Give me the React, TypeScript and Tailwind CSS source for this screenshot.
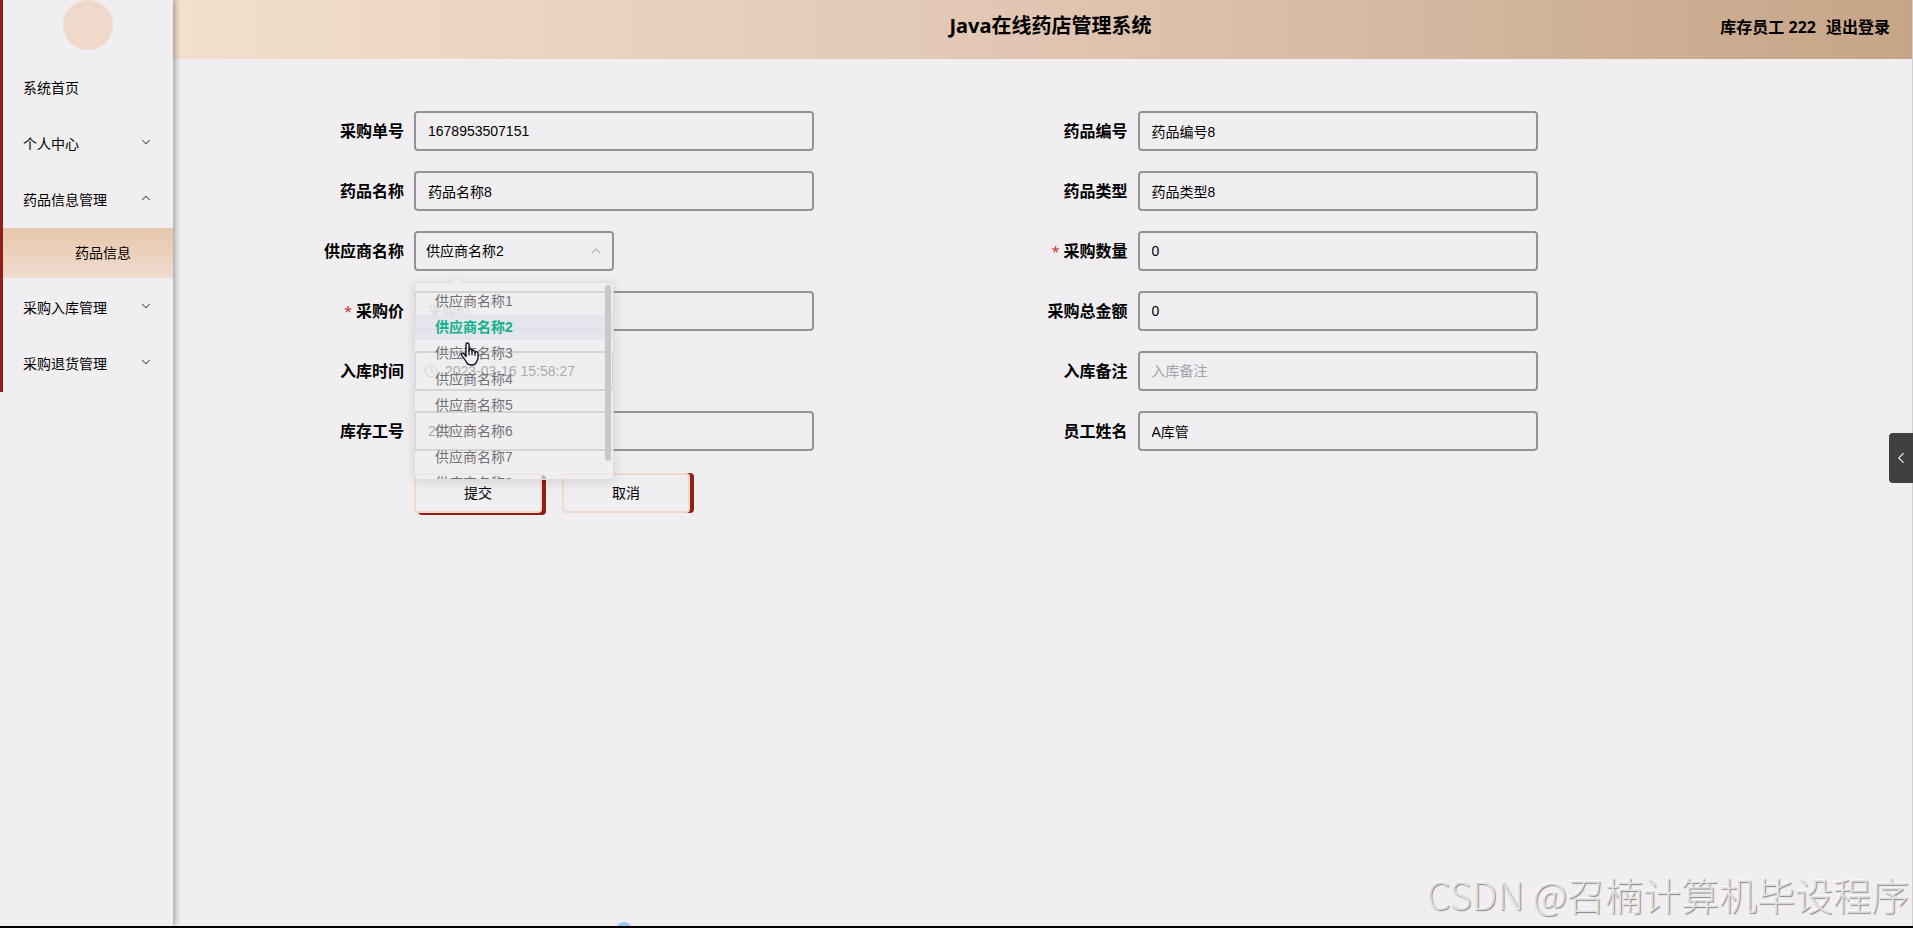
import { useState } from "react";
import { ChevronDown, ChevronLeft, ChevronUp, Clock } from "lucide-react";

interface MenuItem {
  title: string;
  children?: string[];
}

interface FieldProps {
  id: string;
  label: string;
  value?: string;
  placeholder?: string;
  required?: boolean;
}

const menus: MenuItem[] = [
  { title: "系统首页" },
  { title: "个人中心", children: ["个人信息"] },
  { title: "药品信息管理", children: ["药品信息"] },
  { title: "采购入库管理", children: ["采购入库"] },
  { title: "采购退货管理", children: ["采购退货"] },
];

const suppliers = [1, 2, 3, 4, 5, 6, 7, 8].map((n) => `供应商名称${n}`);

const inputClass =
  "h-10 rounded border-2 border-[#949397] bg-transparent text-sm text-black outline-none placeholder:text-[#a3a2ab]";

const FieldLabel = ({ id, label, required }: FieldProps) => (
  <label
    htmlFor={id}
    className="w-[95px] shrink-0 whitespace-nowrap pr-2.5 text-right font-['Noto_Sans','Noto_Sans_CJK_SC',sans-serif] text-base font-bold leading-10"
  >
    {required && <span className="mr-1 text-sm font-normal text-[#d03030]">*</span>}
    {label}
  </label>
);

const Field = (props: FieldProps) => (
  <div className="flex">
    <FieldLabel {...props} />
    <input
      id={props.id}
      type="text"
      defaultValue={props.value}
      placeholder={props.placeholder}
      className={`${inputClass} w-[400px] px-3`}
    />
  </div>
);

const Sidebar = () => {
  const [opened, setOpened] = useState("药品信息管理");

  return (
    <aside className="relative z-10 w-[173px] shrink-0 bg-[#f0eef1] shadow-[2px_0_6px_rgba(0,0,0,0.35)]">
      <div className="border-l-3 border-[#911f18]">
        <div className="flex h-[60px] justify-center">
          <div className="size-[50px] rounded-full bg-[#eed9ca]" />
        </div>
        <nav>
          {menus.map((menu) => (
            <div key={menu.title}>
              <button
                type="button"
                onClick={() => setOpened(opened === menu.title ? "" : menu.title)}
                className="flex h-14 w-full cursor-pointer items-center justify-between px-5 text-sm"
              >
                {menu.title}
                {menu.children &&
                  (opened === menu.title ? (
                    <ChevronUp className="mb-1 size-3.5 text-[#444]" strokeWidth={1.75} />
                  ) : (
                    <ChevronDown className="mb-1 size-3.5 text-[#444]" strokeWidth={1.75} />
                  ))}
              </button>
              {opened === menu.title &&
                menu.children?.map((child) => (
                  <a
                    key={child}
                    href="#"
                    className="mb-0.5 block h-[50px] bg-linear-to-b from-[#e6c7ab] to-[#f1dccf] pl-[72px] text-sm leading-[50px]"
                  >
                    {child}
                  </a>
                ))}
            </div>
          ))}
        </nav>
      </div>
    </aside>
  );
};

const SupplierSelect = () => {
  const [supplier, setSupplier] = useState("供应商名称2");

  return (
    <div className="flex">
      <FieldLabel id="supplier" label="供应商名称" />
      <div className="relative">
        <select
          id="supplier"
          value={supplier}
          onChange={(e) => setSupplier(e.target.value)}
          className={`${inputClass} block w-[200px] appearance-none px-2.5`}
        >
          {suppliers.map((name) => (
            <option key={name}>{name}</option>
          ))}
        </select>
        <ChevronUp className="pointer-events-none absolute right-2.5 top-3 size-4 text-[#b5b5bd]" strokeWidth={1.75} />

        {/* Options panel */}
        <div className="absolute left-0 top-[51px] z-20 h-[198px] w-full rounded border border-[#dddce2] bg-[#f0eef1]/70 shadow-[0_2px_12px_rgba(0,0,0,0.12)]">
          <svg className="absolute -top-[6px] left-9 h-[6px] w-3" viewBox="0 0 12 6">
            <path d="M0 6 L6 0 L12 6" fill="#f0eef1" stroke="#dddce2" />
          </svg>
          <ul className="h-full overflow-hidden pt-[5px]">
            {suppliers.map((name) => (
              <li
                key={name}
                onClick={() => setSupplier(name)}
                className={`h-[26px] cursor-pointer pl-5 text-sm leading-[26px] ${
                  name === supplier ? "bg-[#e2e4ec]/80 font-bold text-[#0fb18b]" : "text-[#727276]"
                }`}
              >
                {name}
              </li>
            ))}
          </ul>
          <div className="absolute right-0.5 top-0.5 h-44 w-1.5 rounded-full bg-[#c6c8ca]" />
          {/* Hand pointer */}
          <svg className="pointer-events-none absolute left-[45px] top-[59px] h-6 w-5" viewBox="0 0 20 24">
            <path
              d="M6 14.5V2.6C6 .4 9 .4 9 2.6V9.5V8.2C9.4 6.8 12 6.9 12 8.6V10V9.2C12.4 7.9 15 8 15 9.8V11V10.4C15.5 9.2 18 9.4 18 11.4V16C18 18 16.6 19.4 16 21C15.2 23.6 7.8 23.6 7 21C6 18.4 3 15.6 1.6 13.4C.6 11.6 2.8 10.4 4.2 12Z"
              fill="#f4f2f5"
              stroke="#16161e"
              strokeWidth="1.4"
              strokeLinejoin="round"
            />
            <path d="M9 9V13M12 9.5V13M15 10.5V13.5" stroke="#16161e" strokeWidth="1.2" strokeLinecap="round" />
          </svg>
        </div>
      </div>
    </div>
  );
};

const PurchaseForm = () => (
  <form className="px-[146px] pt-[52px]" onSubmit={(e) => e.preventDefault()}>
    <div className="grid grid-cols-2 gap-y-5">
      <Field id="orderNo" label="采购单号" value="1678953507151" />
      <Field id="drugNo" label="药品编号" value="药品编号8" />
      <Field id="drugName" label="药品名称" value="药品名称8" />
      <Field id="drugType" label="药品类型" value="药品类型8" />
      <SupplierSelect />
      <Field id="amount" label="采购数量" value="0" required />
      <Field id="price" label="采购价" placeholder="采购价" required />
      <Field id="total" label="采购总金额" value="0" />
      <div className="flex">
        <FieldLabel id="stockTime" label="入库时间" />
        <div className="relative">
          <Clock className="absolute left-2.5 top-[13px] size-3.5 text-[#a3a2ab]" strokeWidth={1.75} />
          <input
            id="stockTime"
            type="text"
            defaultValue="2023-03-16 15:58:27"
            className={`${inputClass} w-[200px] pl-[29px] pr-3`}
          />
        </div>
      </div>
      <Field id="remark" label="入库备注" placeholder="入库备注" />
      <Field id="staffNo" label="库存工号" value="222" />
      <Field id="staffName" label="员工姓名" value="A库管" />
    </div>
    <div className="mt-[22px] flex gap-5 pl-[95px]">
      <button
        type="submit"
        className="h-10 w-32 cursor-pointer rounded border-2 border-[#f0dacb] bg-[#f0eef1] text-sm shadow-[4px_2px_0_#911f18]"
      >
        提交
      </button>
      <button
        type="button"
        className="h-10 w-32 cursor-pointer rounded border-2 border-[#f0dacb] bg-[#f0eef1] text-sm shadow-[4px_0_0_#911f18]"
      >
        取消
      </button>
    </div>
  </form>
);

const App = () => {
  return (
    <div className="relative flex min-h-screen overflow-hidden border-b-2 border-black bg-[#f0eef1] font-['Liberation_Sans','Noto_Sans_CJK_SC',sans-serif] text-black">
      <Sidebar />
      <div className="min-w-0 flex-1 border-r border-[#cfced2]">
        <header className="grid h-[59px] grid-cols-[1fr_auto_1fr] bg-linear-to-r from-[#f2dfcd] via-[#e0c6b2] to-[#c6a587] pl-[38px] pr-[22px] font-['Noto_Sans','Noto_Sans_CJK_SC',sans-serif] font-bold">
          <h1 className="col-start-2 text-xl leading-[52px]">Java在线药店管理系统</h1>
          <div className="flex justify-end gap-2.5 text-base leading-[54px]">
            <span>库存员工 222</span>
            <a href="#">退出登录</a>
          </div>
        </header>
        <PurchaseForm />
      </div>

      <button
        type="button"
        aria-label="展开"
        className="absolute right-0 top-[433px] flex h-[50px] w-6 items-center justify-center rounded-l-sm bg-[#404040] text-[#e4e4e4]"
      >
        <ChevronLeft className="size-[18px]" strokeWidth={1.5} />
      </button>

      <div className="pointer-events-none absolute bottom-1 right-1 whitespace-nowrap font-['Noto_Sans_CJK_SC',sans-serif] text-[38px] font-light text-[#e2e1e3] [text-shadow:1px_1px_1px_#858585,-1px_-1px_0_#fafafa]">
        CSDN @召楠计算机毕设程序
      </div>
      <div className="absolute -bottom-3 left-[616px] size-4 rounded-full bg-[#9ccbf2]" />
    </div>
  );
};

export default App;
